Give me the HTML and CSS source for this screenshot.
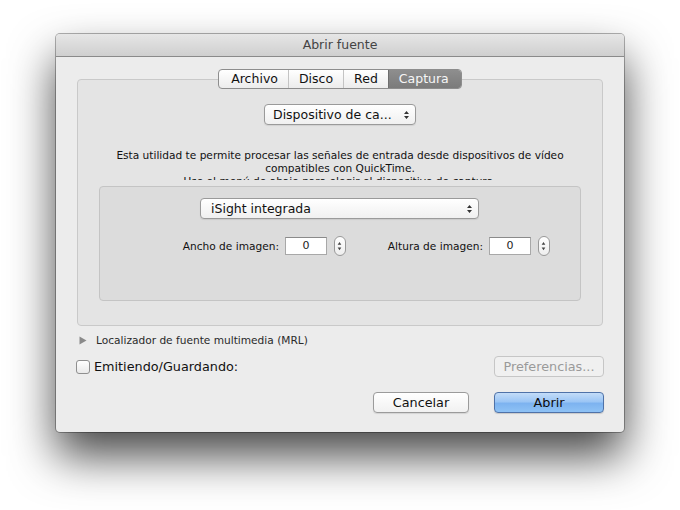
FILE: index.html
```html
<!DOCTYPE html>
<html lang="es">
<head>
<meta charset="utf-8">
<title>Abrir fuente</title>
<link rel="stylesheet" href="styles.css">
</head>
<body>
<div class="window">
  <div class="titlebar">Abrir fuente</div>
  <div class="content">
    <div class="tabs-row">
      <div class="tabs">
        <span class="tab">Archivo</span>
        <span class="tab">Disco</span>
        <span class="tab">Red</span>
        <span class="tab active">Captura</span>
      </div>
    </div>
    <div class="panel">
      <div class="popup popup-device">
        <span class="popup-label">Dispositivo de ca...</span>
        <span class="updown"><svg width="7" height="10" viewBox="0 0 7 10"><path d="M3.5 1 L6 4 L1 4 Z M3.5 9 L6 6 L1 6 Z" fill="#333"/></svg></span>
      </div>
      <div class="description">
        <p>Esta utilidad te permite procesar las señales de entrada desde dispositivos de vídeo</p>
        <p>compatibles con QuickTime.</p>
        <p>Use el menú de abajo para elegir el dispositivo de captura.</p>
      </div>
      <div class="inner">
        <div class="popup popup-isight">
          <span class="popup-label">iSight integrada</span>
          <span class="updown"><svg width="7" height="10" viewBox="0 0 7 10"><path d="M3.5 1 L6 4 L1 4 Z M3.5 9 L6 6 L1 6 Z" fill="#333"/></svg></span>
        </div>
        <div class="size-row">
          <span class="lbl lbl-w">Ancho de imagen:</span>
          <span class="field">0</span>
          <span class="stepper"><svg width="12" height="20" viewBox="0 0 12 20"><path d="M6 5.5 L8 8.5 L4 8.5 Z M6 14.5 L8 11.5 L4 11.5 Z" fill="#444"/></svg></span>
          <span class="lbl lbl-h">Altura de imagen:</span>
          <span class="field">0</span>
          <span class="stepper"><svg width="12" height="20" viewBox="0 0 12 20"><path d="M6 5.5 L8 8.5 L4 8.5 Z M6 14.5 L8 11.5 L4 11.5 Z" fill="#444"/></svg></span>
        </div>
      </div>
    </div>
    <div class="disclosure">
      <svg class="tri" width="8" height="9" viewBox="0 0 8 9"><path d="M0.5 0.5 L7.5 4.5 L0.5 8.5 Z" fill="#8a8a8a"/></svg>
      <span>Localizador de fuente multimedia (MRL)</span>
    </div>
    <div class="stream-row">
      <label class="check"><span class="box"></span><span>Emitiendo/Guardando:</span></label>
      <span class="btn btn-disabled">Preferencias...</span>
    </div>
    <div class="button-row">
      <span class="btn btn-cancel">Cancelar</span>
      <span class="btn btn-default">Abrir</span>
    </div>
  </div>
</div>
</body>
</html>
```
FILE: styles.css
```css
html, body {
  margin: 0;
  padding: 0;
  background: #ffffff;
}
body {
  width: 680px;
  height: 510px;
  overflow: hidden;
  font-family: "DejaVu Sans", "Liberation Sans", sans-serif;
  color: #1a1a1a;
}
.window {
  margin: 34px 0 0 56px;
  width: 568px;
  background: #ececec;
  border-radius: 4px;
  box-shadow: 0 0 0 1px rgba(0,0,0,0.3), 0 24px 46px rgba(0,0,0,0.72);
  overflow: hidden;
}
.titlebar {
  height: 22px;
  line-height: 22px;
  text-align: center;
  font-size: 12.5px;
  color: #444;
  background: linear-gradient(#e6e6e6, #cfcfcf);
  border-bottom: 1px solid #8a8a8a;
}
.content {
  padding: 0 20px 19px;
}
.tabs-row {
  display: flex;
  justify-content: center;
  margin-top: 12px;
  position: relative;
  z-index: 1;
}
.tabs {
  display: flex;
  height: 18px;
  border: 1px solid #8d8d8d;
  border-radius: 4px;
  background: linear-gradient(#ffffff, #ececec);
  overflow: hidden;
}
.tab {
  font-size: 12.5px;
  line-height: 18px;
  padding: 0 10px 0 10px;
  border-left: 1px solid #c4c4c4;
  color: #111;
}
.tab:first-child { border-left: none; padding-left: 12px; }
.tab.active {
  background: linear-gradient(#8e8e8e, #7b7b7b);
  color: #f6f6f6;
  border-left-color: #6e6e6e;
  padding: 0 12px 0 10px;
}
.panel {
  margin: -10px 1px 0;
  border: 1px solid #c9c9c9;
  border-radius: 4px;
  background: #e4e4e4;
  padding: 24px 21px 24px;
  display: flex;
  flex-direction: column;
}
.popup {
  display: flex;
  align-items: center;
  height: 19px;
  border: 1px solid #9a9a9a;
  border-radius: 4px;
  background: linear-gradient(#ffffff, #f0f0f0);
  box-shadow: 0 1px 1px rgba(0,0,0,0.08);
  font-size: 12.5px;
  color: #111;
}
.popup-label { flex: 1; white-space: nowrap; }
.updown { display: flex; width: 18px; justify-content: center; }
.popup-device {
  align-self: center;
  padding-left: 8px;
  width: 142px;
}
.description {
  margin-top: 24px;
  height: 31px;
  overflow: hidden;
  text-align: center;
  font-size: 10.6px;
  line-height: 13px;
  color: #111;
}
.description p { margin: 0; }
.inner {
  margin-top: 6px;
  height: 113px;
  border: 1px solid #c4c4c4;
  border-radius: 4px;
  background: #dcdcdc;
}
.popup-isight {
  margin: 11px 0 0 100px;
  width: 267px;
  padding-left: 10px;
}
.size-row {
  display: flex;
  align-items: center;
  height: 20px;
  margin-top: 17px;
  font-size: 10.6px;
  color: #111;
}
.lbl { text-align: right; white-space: nowrap; }
.lbl-w { width: 100px; margin-left: 79px; }
.lbl-h { width: 137px; }
.field {
  width: 40px;
  height: 16px;
  line-height: 16px;
  margin-left: 6px;
  border: 1px solid #a8a8a8;
  border-top-color: #8a8a8a;
  background: #fff;
  text-align: center;
  font-size: 11px;
  color: #222;
}
.stepper {
  display: flex;
  width: 10px;
  height: 18px;
  margin-left: 7px;
  border: 1px solid #999;
  border-radius: 6px;
  background: linear-gradient(#ffffff, #eeeeee);
  overflow: hidden;
}
.stepper svg { margin-left: -1px; margin-top: -1px; }
.disclosure {
  display: flex;
  align-items: center;
  height: 14px;
  margin-top: 7px;
  font-size: 10.6px;
  color: #2a2a2a;
}
.tri { margin-left: 3px; margin-right: 9px; }
.stream-row {
  display: flex;
  justify-content: space-between;
  align-items: center;
  margin-top: 9px;
  height: 21px;
}
.check {
  display: flex;
  align-items: center;
  font-size: 12.8px;
  color: #111;
}
.box {
  width: 12px;
  height: 12px;
  border: 1px solid #8f8f8f;
  border-radius: 3px;
  background: linear-gradient(#ffffff, #e9e9e9);
  margin-right: 4px;
}
.btn {
  box-sizing: border-box;
  display: flex;
  align-items: center;
  justify-content: center;
  height: 21px;
  width: 110px;
  border-radius: 4px;
  font-size: 12.8px;
}
.btn-disabled {
  border: 1px solid #c6c6c6;
  background: #f0f0f0;
  color: #9a9a9a;
}
.button-row {
  display: flex;
  justify-content: flex-end;
  gap: 25px;
  margin-top: 15px;
}
.btn-cancel {
  width: 96px;
  border: 1px solid #9b9b9b;
  background: linear-gradient(#ffffff, #f1f1f1);
  color: #111;
  box-shadow: 0 1px 1px rgba(0,0,0,0.1);
}
.btn-default {
  border: 1px solid #4f72a8;
  background: linear-gradient(#c3dcf8 0%, #9cc6f5 45%, #7db3f0 55%, #8ec2f5 100%);
  color: #0c0c0c;
  box-shadow: 0 1px 1px rgba(0,0,0,0.15);
}
```
